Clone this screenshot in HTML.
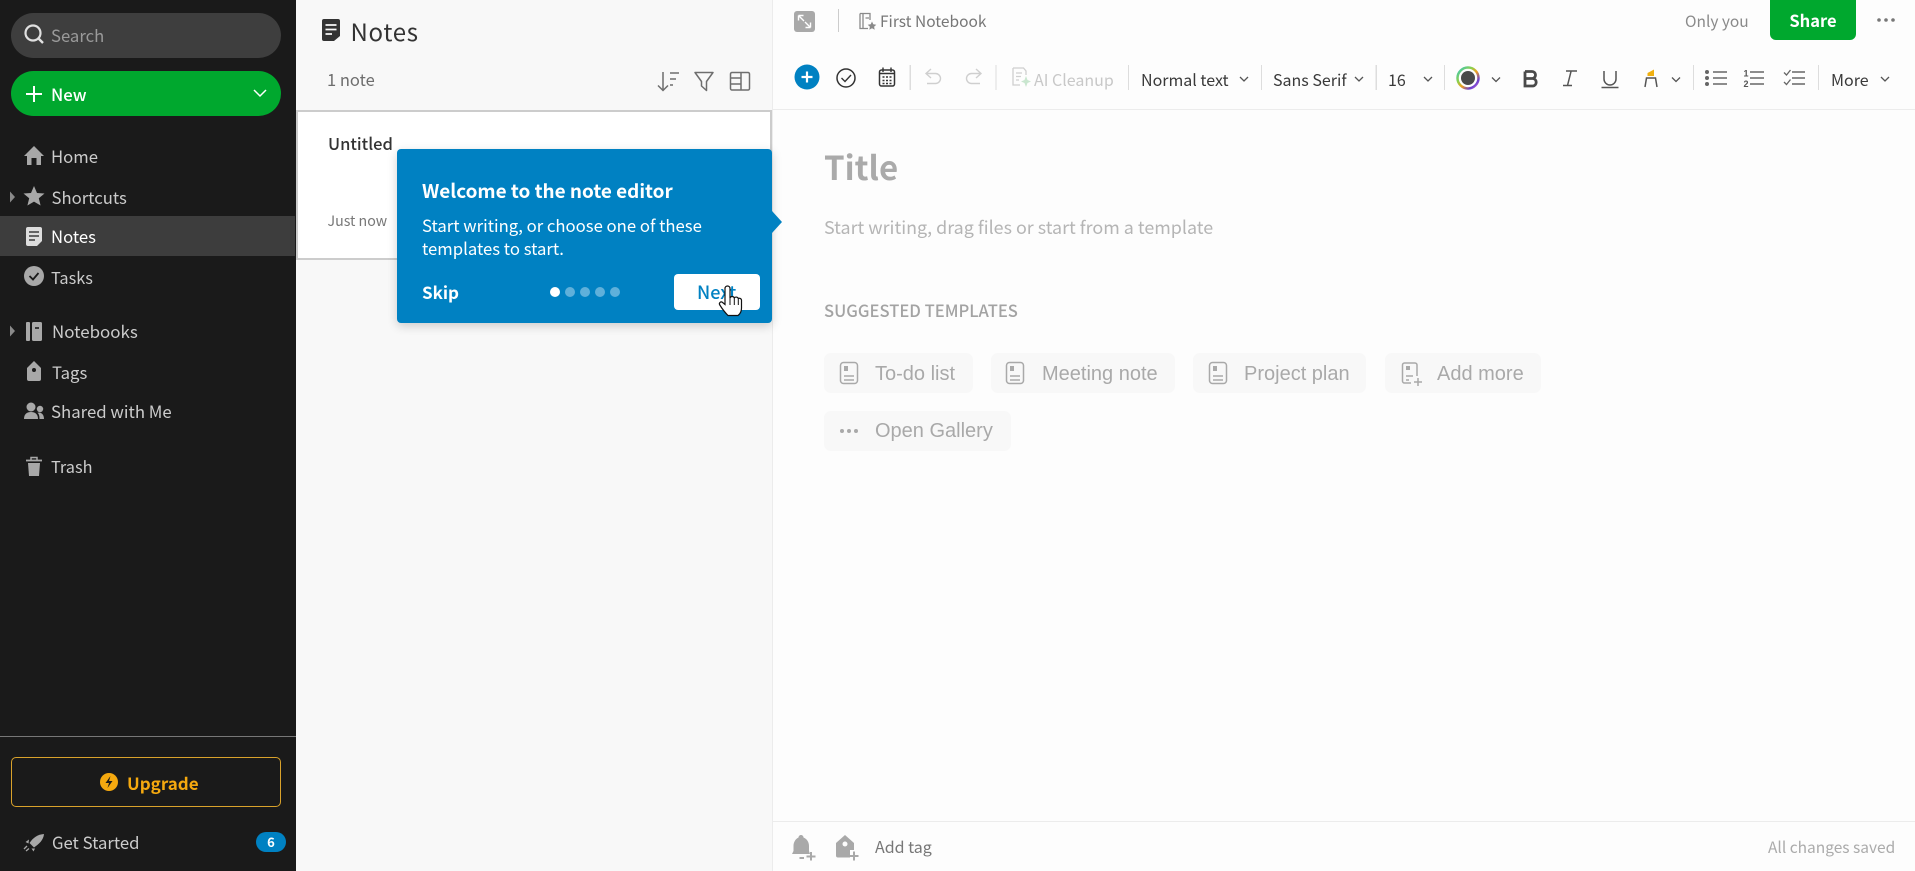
<!DOCTYPE html>
<html lang="en"><head><meta charset="utf-8"><title>Notes</title>
<style>
html,body{margin:0;padding:0;width:1915px;height:871px;overflow:hidden;background:#fdfdfd}
body{position:relative;font-family:"Noto Sans CJK SC","Liberation Sans",sans-serif;}
.b{position:absolute;box-sizing:border-box}
.t{position:absolute;white-space:nowrap;line-height:24px;height:24px}
.ed{color:#3a3a3a;font-size:16px}
.chip{position:absolute;background:#f8f8f8;border-radius:7px}
.c{color:#a9a9a9;font-family:"Liberation Sans",Arial,sans-serif;font-size:20px}
svg{position:absolute;left:0;top:0}
</style></head><body>
<div class="b" style="left:0;top:0;width:296px;height:871px;background:#1a1a1a"></div>
<div class="b" style="left:11px;top:13px;width:270px;height:45px;border-radius:23px;background:#3e3e3e"></div>
<div class="b" style="left:11px;top:71px;width:270px;height:45px;border-radius:23px;background:#00a82e"></div>
<div class="b" style="left:0;top:216px;width:295px;height:40px;background:#3d3d3d"></div>
<div class="b" style="left:0;top:736px;width:296px;height:1px;background:#777"></div>
<div class="b" style="left:11px;top:757px;width:270px;height:50px;border:1.5px solid #d9a22b;border-radius:5px"></div>
<div class="b" style="left:256px;top:832px;width:30px;height:20px;border-radius:10px;background:#0081c2"></div>

<div class="t" style="left:51px;top:23px;color:#9a9a9a;font-size:16.7px">Search</div>
<div class="t" style="left:51px;top:82px;color:#fff;font-size:16.7px;font-weight:500">New</div>
<div class="t" style="left:51px;top:144px;color:#ccc;font-size:16.7px">Home</div>
<div class="t" style="left:51.5px;top:185px;color:#ccc;font-size:16.7px">Shortcuts</div>
<div class="t" style="left:51px;top:224px;color:#fff;font-size:16.7px">Notes</div>
<div class="t" style="left:51px;top:265px;color:#ccc;font-size:16.3px">Tasks</div>
<div class="t" style="left:52px;top:319px;color:#ccc;font-size:16.9px">Notebooks</div>
<div class="t" style="left:52px;top:360px;color:#ccc;font-size:16.7px">Tags</div>
<div class="t" style="left:51px;top:399px;color:#ccc;font-size:16.8px">Shared with Me</div>
<div class="t" style="left:51px;top:454px;color:#ccc;font-size:16.3px">Trash</div>
<div class="t" style="left:127px;top:771px;color:#f5a90f;font-size:17px;font-weight:700">Upgrade</div>
<div class="t" style="left:52px;top:830px;color:#ccc;font-size:16.7px">Get Started</div>
<div class="t" style="left:256px;top:830px;width:30px;text-align:center;color:#fff;font-size:13px;font-weight:700">6</div>

<div class="b" style="left:296px;top:0;width:476px;height:871px;background:#f8f8f8"></div>
<div class="t" style="left:350.500px;top:19px;color:#333;font-size:24px;letter-spacing:.7px">Notes</div>
<div class="t" style="left:327px;top:67px;color:#6e6e6e;font-size:16.5px">1 note</div>
<div class="b" style="left:296px;top:110px;width:476px;height:150px;background:#fff;border:2px solid #ccc"></div>
<div class="t" style="left:328px;top:131px;color:#333;font-size:16.5px;font-weight:500">Untitled</div>
<div class="t" style="left:327.500px;top:209px;color:#777;font-size:14.2px">Just now</div>

<div class="b" style="left:772px;top:0;width:1px;height:871px;background:#ececec"></div>
<div class="b" style="left:773px;top:109px;width:1142px;height:1px;background:#ececec"></div>
<div class="b" style="left:773px;top:821px;width:1142px;height:1px;background:#ececec"></div>

<div class="t" style="left:880px;top:9px;color:#777;font-size:15.5px">First Notebook</div>
<div class="t" style="left:1685px;top:9px;color:#8a8a8a;font-size:15.5px">Only you</div>
<div class="b" style="left:1770px;top:-6px;width:86px;height:46px;border-radius:6px;background:#00a82e"></div>
<div class="t" style="left:1770px;top:8px;width:86px;text-align:center;color:#fff;font-size:16.5px;font-weight:700">Share</div>

<div class="t" style="left:1034px;top:67px;color:#c8c8c8;font-size:16px">AI Cleanup</div>
<div class="t ed" style="left:1141px;top:67px">Normal text</div>
<div class="t ed" style="left:1273px;top:67px">Sans Serif</div>
<div class="t ed" style="left:1388px;top:67px">16</div>
<div class="t ed" style="left:1831px;top:67px">More</div>

<div class="t" style="left:824px;top:146px;height:40px;line-height:40px;color:#aaa;font-size:33px;font-weight:700">Title</div>
<div class="t" style="left:824px;top:215px;color:#b5b5b5;font-size:17.9px">Start writing, drag files or start from a template</div>
<div class="t" style="left:824px;top:297.500px;color:#a3a3a3;font-size:16.6px;font-weight:500">SUGGESTED TEMPLATES</div>

<div class="chip" style="left:824px;top:353px;width:149px;height:40px"></div>
<div class="chip" style="left:991px;top:353px;width:184px;height:40px"></div>
<div class="chip" style="left:1193px;top:353px;width:173px;height:40px"></div>
<div class="chip" style="left:1385px;top:353px;width:156px;height:40px"></div>
<div class="chip" style="left:824px;top:411px;width:187px;height:40px"></div>
<div class="t c" style="left:875px;top:362px">To-do list</div>
<div class="t c" style="left:1042px;top:362px">Meeting note</div>
<div class="t c" style="left:1244px;top:362px">Project plan</div>
<div class="t c" style="left:1437px;top:362px">Add more</div>
<div class="t c" style="left:875px;top:419px">Open Gallery</div>

<div class="t" style="left:875px;top:834px;color:#777;font-size:16px">Add tag</div>
<div class="t" style="left:1768px;top:835px;color:#ababab;font-size:15.5px">All changes saved</div>

<!-- tooltip -->
<div class="b" style="left:397px;top:149px;width:375px;height:174px;border-radius:4px;background:#0081c2;box-shadow:0 3px 10px rgba(0,0,0,.18)"></div>
<div class="t" style="left:422px;top:179px;color:#fff;font-size:18.9px;font-weight:700">Welcome to the note editor</div>
<div class="t" style="left:422px;top:213px;color:#fff;font-size:16.7px">Start writing, or choose one of these</div>
<div class="t" style="left:422px;top:236px;color:#fff;font-size:16.7px">templates to start.</div>
<div class="t" style="left:422px;top:280px;color:#fff;font-size:17px;font-weight:700">Skip</div>
<div class="b" style="left:674px;top:274px;width:86px;height:36px;border-radius:4px;background:#fff"></div>
<div class="t" style="left:697px;top:280px;color:#0081c2;font-size:18px;font-weight:500">Next</div>

<svg width="1915" height="871" viewBox="0 0 1915 871" fill="none">
<!-- search -->
<circle cx="33" cy="33" r="7.5" stroke="#e0e0e0" stroke-width="2.2"/><path d="M38.5 38.5 L43 43" stroke="#e0e0e0" stroke-width="2.4"/>
<path d="M34 86V102M26 94H42" stroke="#fff" stroke-width="2"/>
<path d="M254 90L260 96L266 90" stroke="#fff" stroke-width="1.5"/>
<!-- sidebar -->
<path d="M34 146L44 156H41V165H36.5V158H31.5V165H27V156H24Z" fill="#a8a8a8"/>
<path d="M34 186L37 193 44.5 193.5 38.8 198.3 40.6 205.5 34 201.6 27.4 205.5 29.2 198.3 23.5 193.5 31 193Z" fill="#a8a8a8"/>
<path d="M10 191.5L15 197 10 202.5ZM10 325.5L15 331 10 336.5Z" fill="#8a8a8a"/>
<path d="M28 227H40a2 2 0 0 1 2 2V241L37 246H28a2 2 0 0 1-2-2V229a2 2 0 0 1 2-2Z" fill="#ddd"/>
<path d="M29 232H39M29 236H39M29 240H35" stroke="#3d3d3d" stroke-width="1.6"/>
<circle cx="34" cy="276" r="10" fill="#a8a8a8"/><path d="M29.5 276L33 279.5 38.5 273" stroke="#1a1a1a" stroke-width="1.8"/>
<rect x="26" y="322" width="4" height="19" rx="1" fill="#a8a8a8"/><rect x="32" y="322" width="10" height="19" rx="1.5" fill="#a8a8a8"/><path d="M35 328H39" stroke="#1a1a1a" stroke-width="1.6"/>
<path d="M34 361L41 368V379a2 2 0 0 1-2 2H29a2 2 0 0 1-2-2V368Z" fill="#a8a8a8"/><circle cx="34" cy="370" r="2" fill="#1a1a1a"/>
<circle cx="31" cy="407" r="4.5" fill="#a8a8a8"/><path d="M24 419c0-5 3-7 7-7s7 2 7 7Z" fill="#a8a8a8"/><circle cx="40" cy="409" r="3.2" fill="#a8a8a8"/><path d="M39.5 419c0-3-.5-5-2-6.2 3.8-1 6.5 1.5 6.5 6.2Z" fill="#a8a8a8"/>
<path d="M26 460.5H42" stroke="#a8a8a8" stroke-width="1.8"/><path d="M31 460V457.5H37V460" stroke="#a8a8a8" stroke-width="1.5"/><path d="M28 463H40L39 476H29Z" fill="#a8a8a8"/>
<circle cx="109" cy="782" r="9" fill="#f5a90f"/><path d="M110.5 776L105.5 783H109L107.5 788 112.5 781H109Z" fill="#1a1a1a"/>
<path d="M44 834C37 834.5 33 838 29.5 843L34 847.5C39 844 43.5 840 44 834Z" fill="#a8a8a8"/><path d="M29 839.5L25.5 842 28.5 843.5ZM35 848.5L33.5 851.5 31.5 848.5Z" fill="#a8a8a8"/><path d="M27 846L24 849M29 848.5L26 851" stroke="#a8a8a8" stroke-width="1.3"/>
<!-- middle -->
<path d="M324 19H338a2 2 0 0 1 2 2V36L334 41H324a2 2 0 0 1-2-2V21a2 2 0 0 1 2-2Z" fill="#333"/>
<path d="M325.5 25H336.5M325.5 29.5H336.5M325.5 34H332" stroke="#f8f8f8" stroke-width="1.8"/>
<path d="M663 72V90M658 85.5L663 90.5 668 85.5M670 73H679M670 79H676M670 85H673" stroke="#6e6e6e" stroke-width="1.5"/>
<path d="M695 72.5H713L706.500 81.500V90.500L701.500 86V81.500Z" stroke="#6e6e6e" stroke-width="1.5" stroke-linejoin="round"/>
<rect x="730.5" y="72.5" width="19" height="17.5" rx="1.5" stroke="#6e6e6e" stroke-width="1.5"/><path d="M741 72.5V90M730.5 78H741M730.5 84H741" stroke="#6e6e6e" stroke-width="1.5"/>
<!-- tooltip pieces -->
<path d="M772 211L782 222 772 233Z" fill="#0081c2"/>
<circle cx="555" cy="292" r="5" fill="#fff"/><circle cx="570" cy="292" r="5" fill="#5fb0da"/><circle cx="585" cy="292" r="5" fill="#5fb0da"/><circle cx="600" cy="292" r="5" fill="#5fb0da"/><circle cx="615" cy="292" r="5" fill="#5fb0da"/>
<path d="M725 288.5a2.5 2.5 0 0 1 5 0V298a2.3 2.3 0 0 1 4.3 0a2.3 2.3 0 0 1 4 .5a2.2 2.2 0 0 1 3.2 1.5V308c0 3-1.5 6-3.5 7.5H728c-2-2-6-7-8.2-10.5-1.3-2 1-4 2.8-2.5L725 304.5Z" fill="#fff" stroke="#111" stroke-width="1.2"/>
<path d="M730 298V305M734.3 298.5V305M738.3 299V305" stroke="#111" stroke-width="1"/>
<!-- top bar -->
<rect x="794" y="11" width="21" height="21" rx="3" fill="#a9a9a9"/><path d="M798.5 15.5H803.5M798.5 15.5V20.5M798.5 15.5L804 21M810.5 27.5H805.5M810.5 27.5V22.5M810.5 27.5L805 22" stroke="#fff" stroke-width="1.4"/>
<rect x="838" y="9" width="1" height="23" fill="#ccc"/>
<path d="M860 13.5H870V20M860 13.5V28.5H868M863 13.5V28.5M865.5 18H869" stroke="#8a8a8a" stroke-width="1.3"/><path d="M872 21.5L873.3 24.3 876.3 24.7 874.1 26.8 874.7 29.8 872 28.3 869.3 29.800 869.900 26.800 867.700 24.700 870.700 24.300Z" fill="#8a8a8a"/>
<g fill="#777"><circle cx="1879" cy="20" r="1.8"/><circle cx="1886" cy="20" r="1.8"/><circle cx="1893" cy="20" r="1.8"/></g>
<!-- toolbar left -->
<circle cx="807" cy="77" r="12.5" fill="#0081c2"/><path d="M807 71.5V82.5M801.5 77H812.5" stroke="#fff" stroke-width="2.2"/>
<circle cx="846" cy="78" r="9" stroke="#333" stroke-width="1.5"/><path d="M841.5 78L845 81.5 851 75" stroke="#333" stroke-width="1.4"/>
<rect x="879.5" y="70" width="15" height="16" rx="2" stroke="#333" stroke-width="1.5"/><path d="M883 67.5V72M891 67.5V72M879.5 73.5H894.5" stroke="#333" stroke-width="1.4"/><path d="M882.5 77H892M882.5 80.5H892M882.5 83.5H892" stroke="#333" stroke-width="1.5" stroke-dasharray="2 1.5"/>
<rect x="909.5" y="65" width="1.5" height="25" fill="#ddd"/>
<path d="M931 69L926 73.5 931 78M926 73.5H935.5a5 5 0 0 1 0 10H927" stroke="#cfcfcf" stroke-width="1.4"/>
<path d="M976 69L981 73.5 976 78M981 73.5H971.5a5 5 0 0 0 0 10H980" stroke="#cfcfcf" stroke-width="1.4"/>
<rect x="995.5" y="65" width="1" height="25" fill="#ddd"/>
<path d="M1013 68H1023.5L1026 71V75M1013 68V85H1020" stroke="#cfcfcf" stroke-width="1.3"/><path d="M1016 73H1022M1016 76.5H1021M1016 80H1019" stroke="#cfcfcf" stroke-width="1.2"/><path d="M1026 76L1027.5 80 1031 81.5 1027.5 83 1026 87 1024.5 83 1021 81.5 1024.5 80Z" fill="#c9e6cf"/>
<rect x="1128" y="65" width="1" height="25" fill="#ddd"/>
<rect x="1261" y="65" width="1" height="25" fill="#ddd"/>
<rect x="1375.5" y="65" width="1.5" height="25" fill="#ddd"/>
<rect x="1444" y="65" width="1" height="25" fill="#ddd"/>
<rect x="1693" y="65" width="1" height="25" fill="#ddd"/>
<rect x="1818" y="65" width="1" height="25" fill="#ddd"/>
<g stroke="#555" stroke-width="1.3"><path d="M1240 77L1244 81 1248 77M1355 77L1359 81 1363 77M1424 77L1428 81 1432 77M1492 77.5L1496 81.5 1500 77.5M1672 77.5L1676 81.5 1680 77.5M1881 77L1885 81 1889 77"/></g>
<!-- color -->
<circle cx="1468" cy="78" r="10.5" stroke="url(#rb)" stroke-width="2.5"/><circle cx="1468" cy="78" r="7" fill="#4a4a4a"/>
<defs><linearGradient id="rb" x1="0" y1="0" x2="1" y2="1"><stop offset="0" stop-color="#35c6c0"/><stop offset=".35" stop-color="#8ed04a"/><stop offset=".55" stop-color="#f0a020"/><stop offset=".8" stop-color="#6a3fd0"/><stop offset="1" stop-color="#d070d0"/></linearGradient></defs>
<!-- B I U -->
<path d="M1525 71.5H1532a3.5 3.5 0 0 1 0 7H1525M1525 78.5H1533a3.800 3.800 0 0 1 0 7.500H1525ZM1525 71.500V86" stroke="#4a4a4a" stroke-width="2.8"/>
<path d="M1566 71H1577M1563 85.5H1572M1571 71.5L1567.5 85.5" stroke="#555" stroke-width="1.5"/>
<path d="M1604 71V79a6 6 0 0 0 12 0V71M1601.5 87.5H1618.5" stroke="#555" stroke-width="1.5"/>
<path d="M1645 87L1646.5 78H1655.5L1657 87" stroke="#555" stroke-width="1.5"/><path d="M1647.5 76V73L1654 69.5V76Z" fill="#f0b010"/>
<!-- lists -->
<g fill="#666"><circle cx="1707" cy="72" r="2"/><circle cx="1707" cy="78" r="2"/><circle cx="1707" cy="84" r="2"/></g>
<path d="M1713 72H1727M1713 78H1727M1713 84H1727" stroke="#666" stroke-width="1.5"/>
<path d="M1750 72H1764M1750 78H1764M1750 84H1764" stroke="#666" stroke-width="1.5"/>
<text x="1746" y="76.5" font-size="9" font-weight="700" fill="#555" text-anchor="middle" font-family="Liberation Sans,sans-serif">1</text>
<text x="1746" y="87" font-size="9" font-weight="700" fill="#555" text-anchor="middle" font-family="Liberation Sans,sans-serif">2</text>
<path d="M1784 72.5L1786.5 75 1790.5 70M1784 82L1786.5 84.5 1790.5 79.5" stroke="#666" stroke-width="1.3"/>
<path d="M1792 72H1805M1792 78H1805M1792 84H1805" stroke="#666" stroke-width="1.5"/>
<!-- chips icons -->
<g stroke="#a9a9a9" stroke-width="1.5">
<rect x="840.5" y="362.5" width="17" height="21" rx="3"/><path d="M844 376H854M844 380H854"/>
<rect x="1006.5" y="362.5" width="17" height="21" rx="3"/><path d="M1010 376H1020M1010 380H1020"/>
<rect x="1209.5" y="362.5" width="17" height="21" rx="3"/><path d="M1213 376H1223M1213 380H1223"/>
<path d="M1417 376V365a2 2 0 0 0-2-2H1404.5a2 2 0 0 0-2 2V381a2 2 0 0 0 2 2H1411M1406 376H1413M1406 380H1409M1418 378V386M1414 382H1422"/>
</g>
<g fill="#a9a9a9"><rect x="844" y="366" width="4" height="5"/><rect x="1010" y="366" width="4" height="5"/><rect x="1213" y="366" width="4" height="5"/><rect x="1406" y="366" width="4" height="4"/>
<circle cx="842" cy="431" r="2"/><circle cx="849" cy="431" r="2"/><circle cx="856" cy="431" r="2"/></g>
<!-- footer -->
<path d="M801 835a2.5 2.5 0 0 1 2.5 2.5C807 839 809 842 809 846V851L810 854H792L793.5 851V846C793.5 842 795.5 839 798.5 837.5A2.5 2.5 0 0 1 801 835Z" fill="#a9a9a9"/>
<path d="M799.5 858H804M811 852V860.5M806.5 856.5H815.5" stroke="#a9a9a9" stroke-width="2"/>
<path d="M845 835L854 843V850H850V857.5H838a2 2 0 0 1-2-2V843Z" fill="#a9a9a9"/><circle cx="845" cy="844" r="2.5" fill="#fdfdfd"/>
<path d="M854 851.5V860.5M849.5 856H858.5" stroke="#a9a9a9" stroke-width="2"/>
</svg>
</body></html>
